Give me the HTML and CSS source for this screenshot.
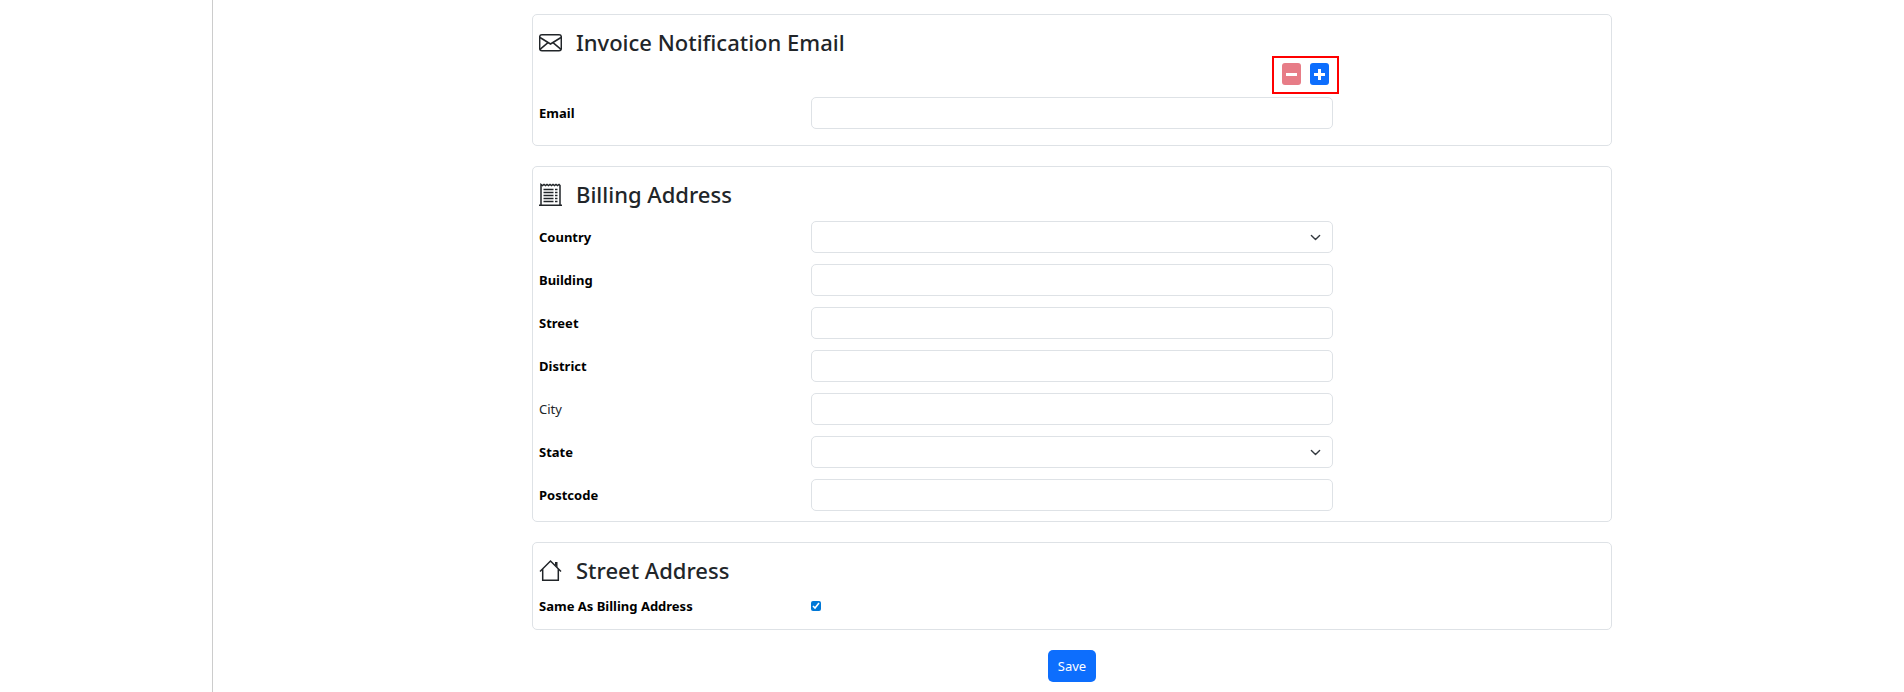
FILE: index.html
```html
<!DOCTYPE html>
<html lang="en">
<head>
<meta charset="utf-8">
<title>Billing Details</title>
<link rel="stylesheet" href="styles.css">
</head>
<body>
<div class="layout">
  <aside class="sidebar"></aside>
  <main class="main">
    <form class="form">
      <section class="card card-email">
        <h4 class="card-title">
          <svg class="icon" viewBox="0 0 23 23" aria-hidden="true"><rect x=".7" y="3.700" width="21.600" height="16" rx="2.200"/><path d="M1 6.500 11.500 13 22 6.500M1 18.300 9 11.700M22 18.300 14 11.700"/></svg>
          Invoice Notification Email
        </h4>
        <div class="row">
          <div class="tools">
            <button type="button" class="tool tool-remove" aria-label="Remove email" disabled><svg viewBox="0 0 11 11"><path d="M0 5.500h11"/></svg></button>
            <button type="button" class="tool tool-add" aria-label="Add email"><svg viewBox="0 0 11 11"><path d="M0 5.500h11M5.500 0v11"/></svg></button>
          </div>
        </div>
        <div class="row"><label for="email">Email</label><input class="control" id="email" type="email"></div>
      </section>

      <section class="card card-billing">
        <h4 class="card-title">
          <svg class="icon" viewBox="0 0 23 23" aria-hidden="true"><path d="M2 22V1.500L3.500 2.500 5 1.500 6.500 2.500 8 1.500 9.500 2.500 11 1.500 12.500 2.500 14 1.500 15.500 2.500 17 1.500 18.500 2.500 20 1.500 21 2.500V22M0 22.200H23M4.500 6.500H14.500M4.500 9.500H14.500M4.500 12.500H14.500M4.500 15.500H14.500M4.500 18.500H14.500M16 6.500H18.500M16 9.500H18.500M16 12.500H18.500M16 15.500H18.500M16 18.500H18.500"/></svg>
          Billing Address
        </h4>
        <div class="row"><label for="country">Country</label><select class="control" id="country"><option></option></select></div>
        <div class="row"><label for="building">Building</label><input class="control" id="building" type="text"></div>
        <div class="row"><label for="street">Street</label><input class="control" id="street" type="text"></div>
        <div class="row"><label for="district">District</label><input class="control" id="district" type="text"></div>
        <div class="row"><label class="optional" for="city">City</label><input class="control" id="city" type="text"></div>
        <div class="row"><label for="state">State</label><select class="control" id="state"><option></option></select></div>
        <div class="row"><label for="postcode">Postcode</label><input class="control" id="postcode" type="text"></div>
      </section>

      <section class="card card-street">
        <h4 class="card-title">
          <svg class="icon" viewBox="0 0 23 23" aria-hidden="true"><path d="M1 12.500 11.500 2 22 12.500M3.700 10V21.300H19.300V10"/><path class="solid" d="M16 6V3H18.500V8.500Z"/></svg>
          Street Address
        </h4>
        <div class="row"><label for="same">Same As Billing Address</label><input class="check" id="same" type="checkbox" checked></div>
      </section>

      <button type="submit" class="save">Save</button>
    </form>
  </main>
</div>
</body>
</html>
```
FILE: styles.css
```css
* { box-sizing: border-box; }

body {
  margin: 0;
  background: #fff;
  color: #212529;
  font: 13px/20px "Segoe UI", "Noto Sans", sans-serif;
}

.layout { display: flex; min-height: 100vh; }

.sidebar { flex: 0 0 213px; border-right: 1px solid #ccc; }

.main { flex: 1; padding: 14px 0 10px 27px; }

.form {
  display: flex;
  flex-direction: column;
  gap: 20px;
  max-width: 1080px;
  margin: 0 auto;
}

.card {
  display: flex;
  flex-direction: column;
  gap: 11px;
  padding: 13px 6px 10px;
  border: 1px solid #dee2e6;
  border-radius: 5px;
}

.card-email { padding-bottom: 16px; }
.card-street { gap: 10px; padding-bottom: 13px; }

.card-title {
  display: flex;
  align-items: center;
  gap: 14px;
  margin: 0 0 1px;
  font-size: 22px;
  line-height: 29px;
  font-weight: 500;
}

.icon {
  width: 23px;
  height: 23px;
  fill: none;
  stroke: #212529;
  stroke-width: 1.5;
}

.solid { fill: #212529; stroke: none; }

.row {
  display: grid;
  grid-template-columns: 272fr 522fr 272fr;
  align-items: center;
}

label { color: #000; font-weight: 700; }
label.optional { color: #212529; font-weight: 400; }

.control {
  width: 100%;
  height: 32px;
  padding: 4px 8px;
  border: 1px solid #dee2e6;
  border-radius: 5px;
  background: #fff;
  font: inherit;
}

select.control {
  appearance: none;
  background: url("data:image/svg+xml,%3Csvg xmlns='http://www.w3.org/2000/svg' viewBox='0 0 16 16'%3E%3Cpath fill='none' stroke='%23343a40' stroke-linecap='round' stroke-linejoin='round' stroke-width='2' d='m2 5 6 6 6-6'/%3E%3C/svg%3E") no-repeat right 11px center / 11px 11px;
}

.tools {
  position: relative;
  grid-column: 2;
  justify-self: end;
  display: flex;
  gap: 9px;
  margin: -6px 4px 1px 0;
}

.tools::after {
  content: "";
  position: absolute;
  inset: -7px -10px -9px;
  border: 2px solid #f00;
  pointer-events: none;
}

.tool {
  display: flex;
  align-items: center;
  justify-content: center;
  width: 19px;
  height: 22px;
  padding: 0;
  border: 0;
  border-radius: 3px;
}

.tool svg { width: 11px; height: 11px; stroke: #fff; stroke-width: 3; }
.tool-remove { background: #e77c87; }
.tool-add { background: #0d6efd; }

.check { width: 10px; height: 10px; margin: 0; accent-color: #0078d7; }

.save {
  align-self: center;
  height: 32px;
  padding: 0 10px;
  border: 0;
  border-radius: 5px;
  background: #0d6efd;
  color: #fff;
  font: inherit;
}
```
